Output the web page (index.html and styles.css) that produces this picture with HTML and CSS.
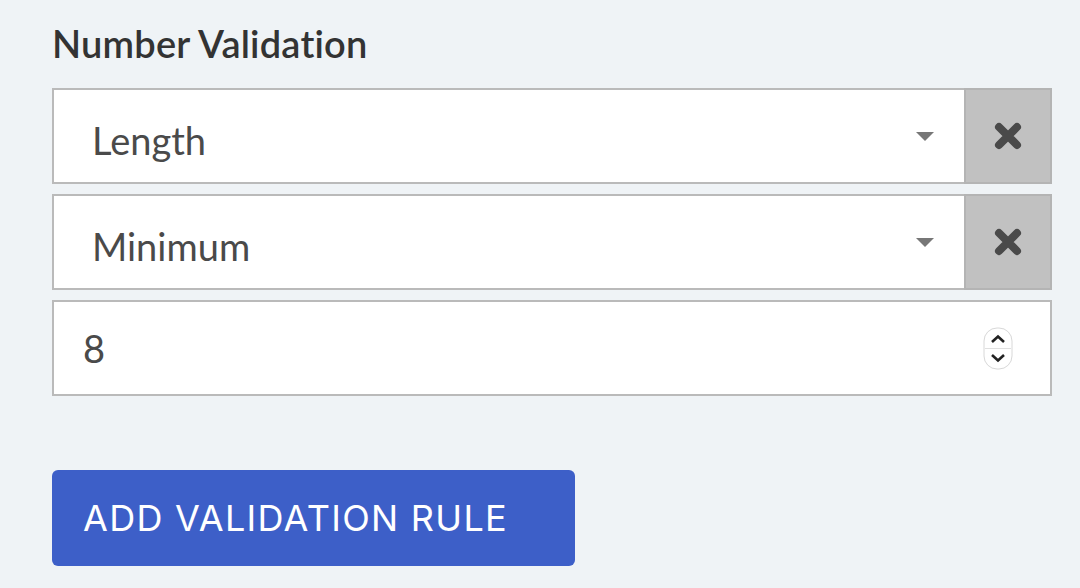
FILE: index.html
```html
<!DOCTYPE html>
<html lang="en">
<head>
  <meta charset="UTF-8" />
  <title>Number Validation</title>
  <link rel="stylesheet" href="styles.css">
</head>
<body>

  <div class="validation">
    <h2 class="title">Number Validation</h2>

    <div class="rule-row">
      <div class="select-box">
        <span class="select-value">Length</span>
        <span class="caret"></span>
      </div>
      <button class="remove-btn" type="button">
        <svg width="30" height="30" viewBox="0 0 30 30">
          <path d="M6 6 L24 24 M24 6 L6 24" stroke="#4a4a4a" stroke-width="8" stroke-linecap="round"/>
        </svg>
      </button>
    </div>

    <div class="rule-row">
      <div class="select-box">
        <span class="select-value">Minimum</span>
        <span class="caret"></span>
      </div>
      <button class="remove-btn" type="button">
        <svg width="30" height="30" viewBox="0 0 30 30">
          <path d="M6 6 L24 24 M24 6 L6 24" stroke="#4a4a4a" stroke-width="8" stroke-linecap="round"/>
        </svg>
      </button>
    </div>

    <div class="number-box">
      <span class="number-value">8</span>
      <svg class="spinner" width="30" height="43" viewBox="0 0 30 43">
        <rect x="1" y="1" width="28" height="41" rx="13" fill="#fff" stroke="#d8d8d8"/>
        <line x1="2" y1="21.5" x2="28" y2="21.5" stroke="#e0e0e0"/>
        <path d="M9 15 L15 9.5 L21 15" fill="none" stroke="#222" stroke-width="2.6"/>
        <path d="M9 28 L15 33.5 L21 28" fill="none" stroke="#222" stroke-width="2.6"/>
      </svg>
    </div>

    <button class="add-btn" type="button">ADD VALIDATION RULE</button>
  </div>

</body>
</html>
```

FILE: styles.css
```css
* {
  box-sizing: border-box;
}

body {
  margin: 0;
  background: #eff3f6;
  font-family: 'Lato', sans-serif;
  color: #4a4a4a;
}

.validation {
  display: flex;
  flex-direction: column;
  width: 1052px;
  padding: 20px 0 0 52px;
}

.title {
  margin: 0 0 22px 0;
  font-size: 38px;
  font-weight: 600;
  letter-spacing: 0.2px;
  color: #333;
  line-height: 46px;
}

.rule-row {
  display: flex;
  height: 96px;
  margin-bottom: 10px;
}

.select-box {
  flex: 1;
  display: flex;
  align-items: center;
  justify-content: space-between;
  background: #fff;
  border: 2px solid #bababa;
  border-right: none;
  padding: 0 30px 0 38px;
}

.select-value {
  font-size: 38px;
  margin-top: 8px;
}

.caret {
  width: 0;
  height: 0;
  border-left: 9px solid transparent;
  border-right: 9px solid transparent;
  border-top: 9px solid #777;
}

.remove-btn {
  width: 88px;
  display: flex;
  align-items: center;
  justify-content: center;
  background: #c1c1c1;
  border: 2px solid #b4b4b4;
  padding: 0;
}

.number-box {
  display: flex;
  align-items: center;
  justify-content: space-between;
  height: 96px;
  background: #fff;
  border: 2px solid #bababa;
  padding: 0 37px 0 29px;
}

.number-value {
  font-size: 38px;
}

.add-btn {
  align-self: flex-start;
  margin-top: 74px;
  width: 523px;
  height: 96px;
  padding: 0 0 0 31px;
  text-align: left;
  background: #3d5fc8;
  color: #fff;
  border: none;
  border-radius: 6px;
  font-family: 'Inter', sans-serif;
  font-size: 36px;
  font-weight: 400;
  letter-spacing: 1.3px;
}
```
